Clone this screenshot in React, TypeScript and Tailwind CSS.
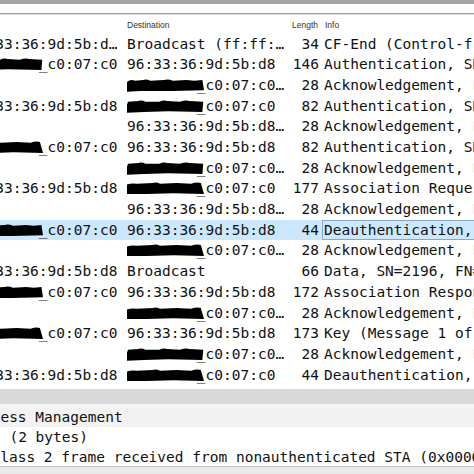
import * as React from "react";

type Row = { src: string; dst: string; len: string; info: string; sel?: boolean };

// "@" marks a vendor name that is blacked out with a marker
const rows: Row[] = [
  { src: "96:33:36:9d:5b:d…", dst: "Broadcast (ff:ff:…", len: "34", info: "CF-End (Control-frame end)" },
  { src: "@_c0:07:c0", dst: "96:33:36:9d:5b:d8", len: "146", info: "Authentication, SN=0, FN=0" },
  { src: "", dst: "@_c0:07:c0…", len: "28", info: "Acknowledgement, Flags=........" },
  { src: "96:33:36:9d:5b:d8", dst: "@_c0:07:c0", len: "82", info: "Authentication, SN=1, FN=0" },
  { src: "", dst: "96:33:36:9d:5b:d8…", len: "28", info: "Acknowledgement, Flags=........" },
  { src: "@_c0:07:c0", dst: "96:33:36:9d:5b:d8", len: "82", info: "Authentication, SN=2, FN=0" },
  { src: "", dst: "@_c0:07:c0…", len: "28", info: "Acknowledgement, Flags=........" },
  { src: "96:33:36:9d:5b:d8", dst: "@_c0:07:c0", len: "177", info: "Association Request, SN=3" },
  { src: "", dst: "96:33:36:9d:5b:d8…", len: "28", info: "Acknowledgement, Flags=........" },
  { src: "@_c0:07:c0", dst: "96:33:36:9d:5b:d8", len: "44", info: "Deauthentication, SN=4", sel: true },
  { src: "", dst: "@_c0:07:c0…", len: "28", info: "Acknowledgement, Flags=........" },
  { src: "96:33:36:9d:5b:d8", dst: "Broadcast", len: "66", info: "Data, SN=2196, FN=0, Flags" },
  { src: "@_c0:07:c0", dst: "96:33:36:9d:5b:d8", len: "172", info: "Association Response, SN=5" },
  { src: "", dst: "@_c0:07:c0…", len: "28", info: "Acknowledgement, Flags=........" },
  { src: "@_c0:07:c0", dst: "96:33:36:9d:5b:d8", len: "173", info: "Key (Message 1 of 4)" },
  { src: "", dst: "@_c0:07:c0…", len: "28", info: "Acknowledgement, Flags=........" },
  { src: "96:33:36:9d:5b:d8", dst: "@_c0:07:c0", len: "44", info: "Deauthentication, SN=6" },
];

const blobPaths = [
  "M4 3 Q8 0 14 2 L24 1 Q28 0 33 2 L50 1 Q56 0 61 2 L78 1 L88 2 L98 1 L100 12 L60 13 L20 13 L0 14 Z",
  "M5 2 L18 1 Q22 0 27 2 L44 2 Q49 0 54 1 L70 2 Q76 0 82 1 L99 2 L98 13 L55 12 L25 13 L0 14 Z",
  "M3 3 Q9 1 16 2 L36 1 Q41 0 45 2 L66 1 L84 2 Q90 0 96 1 L100 13 L62 12 L28 13 L1 13 Z",
];

function Blob({ variant, wide }: { variant: number; wide?: boolean }) {
  return (
    <span className="relative inline-block">
      <span className="text-transparent">Vendor00</span>
      <svg
        className={
          wide
            ? "absolute top-[4px] h-[13px] left-[-3px] w-[80px]"
            : "absolute top-[4px] h-[13px] left-[-3px] w-[77px]"
        }
        viewBox="0 0 100 14"
        preserveAspectRatio="none"
      >
        <path d={blobPaths[variant % blobPaths.length]} fill="#000" />
      </svg>
    </span>
  );
}

function Addr({ text, variant, wide }: { text: string; variant: number; wide?: boolean }) {
  if (text.startsWith("@")) {
    return (
      <>
        <Blob variant={variant} wide={wide} />
        {text.slice(1)}
      </>
    );
  }
  return <>{text}</>;
}

function PacketList() {
  return (
    <div className="overflow-hidden font-['DejaVu_Sans_Mono',monospace] text-[14.5px] text-[#111]">
      <div className="h-[18.6px] pt-[3px] flex items-center font-['Liberation_Sans',sans-serif] text-[8.5px] text-[#333]">
        <div className="w-[127px] shrink-0" />
        <div className="w-[163px] shrink-0">Destination</div>
        <div className="w-[32px] shrink-0 text-right pr-[4px]">Length</div>
        <div className="pl-[3px]">Info</div>
      </div>
      {rows.map((r, i) => (
        <div
          key={i}
          className={
            r.sel
              ? "flex h-[20.7px] leading-[20.7px] whitespace-nowrap bg-[#cce8ff]"
              : "flex h-[20.7px] leading-[20.7px] whitespace-nowrap"
          }
        >
          <div className="w-[158px] shrink-0 ml-[-31px] overflow-hidden">
            <Addr text={r.src} variant={i} />
          </div>
          <div className="w-[163px] shrink-0 overflow-hidden">
            <Addr text={r.dst} variant={i + 1} wide />
          </div>
          <div className="w-[32px] shrink-0 text-right pr-[3px]">{r.len}</div>
          <div
            className={
              r.sel
                ? "flex-1 pl-[1px] border border-[#8aa6c8] leading-[18.7px]"
                : "flex-1 pl-[1px] border border-transparent leading-[18.7px]"
            }
          >
            {r.info}
          </div>
        </div>
      ))}
    </div>
  );
}

function Details() {
  return (
    <div className="h-[59px] overflow-hidden font-['DejaVu_Sans_Mono',monospace] text-[14.5px] text-[#111] whitespace-nowrap">
      <div className="h-[20.3px] leading-[20.3px] bg-[#f2f2f2]">
        <span className="ml-[-148px]">IEEE 802.11 Wireless Management</span>
      </div>
      <div className="h-[20.3px] leading-[20.3px]">
        <span className="ml-[-139px]">Fixed parameters (2 bytes)</span>
      </div>
      <div className="h-[20.3px] leading-[20.3px]">
        <span className="ml-[-122px]">Reason code: Class 2 frame received from nonauthenticated STA (0x0006)</span>
      </div>
    </div>
  );
}

export default function App() {
  return (
    <div className="w-[474px] h-[474px] overflow-hidden bg-white flex flex-col">
      <div className="h-[4px] shrink-0 bg-[#a4a4a4]" />
      <div className="h-[9px] shrink-0" />
      <div className="h-px shrink-0 bg-[#a0a0a0]" />
      <div className="h-px shrink-0 bg-[#dcdcdc]" />
      <PacketList />
      <div className="h-[3.5px] shrink-0" />
      <div className="h-[15px] shrink-0 bg-[#d9d9d9]" />
      <div className="h-[3px] shrink-0 bg-[#f4f4f4]" />
      <Details />
      <div className="h-px shrink-0 bg-[#c4c4c4]" />
      <div className="flex-1 bg-[#e9e9e9]" />
    </div>
  );
}
